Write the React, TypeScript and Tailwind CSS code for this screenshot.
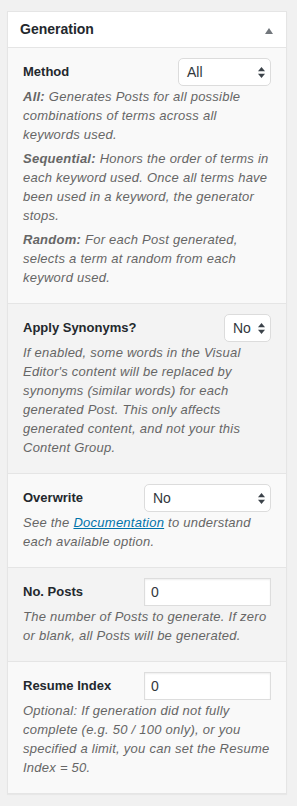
import React from "react";

const Arrows = () => (
  <svg width="7" height="11" viewBox="0 0 7 11" className="shrink-0">
    <path d="M0 4.2 L3.5 0 L7 4.2 Z" fill="#3c434a" />
    <path d="M0 6.8 L3.5 11 L7 6.8 Z" fill="#3c434a" />
  </svg>
);

const Select = ({ value, w }: { value: string; w: string }) => (
  <div
    className={`${w} h-[28px] shrink-0 flex items-center justify-between pl-[8px] pr-[5px] bg-white border border-[#dcdcdc] rounded-[5px] text-[14px] text-[#32373c]`}
  >
    <span>{value}</span>
    <Arrows />
  </div>
);

const Input = ({ value }: { value: string }) => (
  <div className="w-[127px] h-[28px] shrink-0 flex items-center pl-[6px] bg-white border border-[#dddddd] shadow-[inset_0_1px_2px_rgba(0,0,0,0.07)] text-[14px] text-[#32373c]">
    {value}
  </div>
);

const Row = ({
  label,
  control,
  bg,
  children,
}: {
  label: string;
  control: React.ReactNode;
  bg: string;
  children: React.ReactNode;
}) => (
  <div className={`${bg} border-t border-[#e5e5e5] pl-[15px] pr-[15px] pt-[10px] pb-[11px]`}>
    <div className="flex items-center justify-between">
      <span className="text-[13px] font-bold text-[#23282d]">{label}</span>
      {control}
    </div>
    <div className="mt-[1px] text-[13px] leading-[19px] italic tracking-[0.25px] text-[#666666] whitespace-nowrap">
      {children}
    </div>
  </div>
);

export default function App() {
  return (
    <div
      className="min-h-[806px] bg-[#f1f1f1] pt-[11px]"
      style={{ fontFamily: '"Liberation Sans", Arial, sans-serif' }}
    >
      <div className="ml-[7px] w-[280px] bg-white border border-[#e5e5e5] shadow-[0_1px_1px_rgba(0,0,0,0.04)]">
        <div className="h-[35px] flex items-center justify-between pl-[12px] pr-[13px] bg-white">
          <span className="text-[14px] font-bold text-[#23282d]">Generation</span>
          <svg width="8" height="6" viewBox="0 0 8 6" className="mt-[2px]">
            <path d="M0 6 L4 0 L8 6 Z" fill="#72777c" />
          </svg>
        </div>

        <Row label="Method" bg="bg-[#f9f9f9]" control={<Select value="All" w="w-[93px]" />}>
          <p className="mb-[5px]">
            <strong>All:</strong> Generates Posts for all possible
            <br />
            combinations of terms across all
            <br />
            keywords used.
          </p>
          <p className="mb-[5px]">
            <strong>Sequential:</strong> Honors the order of terms in
            <br />
            each keyword used. Once all terms have
            <br />
            been used in a keyword, the generator
            <br />
            stops.
          </p>
          <p className="mb-[5px]">
            <strong>Random:</strong> For each Post generated,
            <br />
            selects a term at random from each
            <br />
            keyword used.
          </p>
        </Row>

        <Row label="Apply Synonyms?" bg="bg-[#f3f3f3]" control={<Select value="No" w="w-[47px]" />}>
          <p className="mb-[5px]">
            If enabled, some words in the Visual
            <br />
            Editor's content will be replaced by
            <br />
            synonyms (similar words) for each
            <br />
            generated Post. This only affects
            <br />
            generated content, and not your this
            <br />
            Content Group.
          </p>
        </Row>

        <Row label="Overwrite" bg="bg-[#f9f9f9]" control={<Select value="No" w="w-[127px]" />}>
          <p className="mb-[5px]">
            See the{" "}
            <a href="#" className="text-[#0073aa] underline">
              Documentation
            </a>{" "}
            to understand
            <br />
            each available option.
          </p>
        </Row>

        <Row label="No. Posts" bg="bg-[#f3f3f3]" control={<Input value="0" />}>
          <p className="mb-[5px]">
            The number of Posts to generate. If zero
            <br />
            or blank, all Posts will be generated.
          </p>
        </Row>

        <Row label="Resume Index" bg="bg-[#f9f9f9]" control={<Input value="0" />}>
          <p className="mb-[5px]">
            Optional: If generation did not fully
            <br />
            complete (e.g. 50 / 100 only), or you
            <br />
            specified a limit, you can set the Resume
            <br />
            Index = 50.
          </p>
        </Row>
      </div>
    </div>
  );
}
